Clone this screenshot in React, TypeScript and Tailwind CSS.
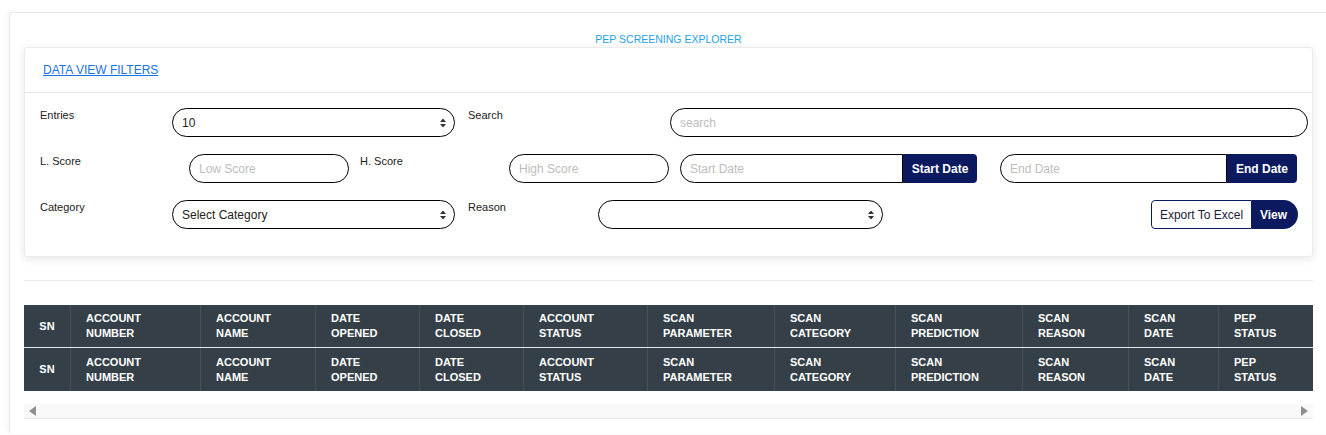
import { useState } from 'react';

const columns = [
  { a: 'SN', b: '', w: 'w-[46px]', center: true },
  { a: 'ACCOUNT', b: 'NUMBER', w: 'w-[130px]' },
  { a: 'ACCOUNT', b: 'NAME', w: 'w-[115px]' },
  { a: 'DATE', b: 'OPENED', w: 'w-[104px]' },
  { a: 'DATE', b: 'CLOSED', w: 'w-[104px]' },
  { a: 'ACCOUNT', b: 'STATUS', w: 'w-[124px]' },
  { a: 'SCAN', b: 'PARAMETER', w: 'w-[127px]' },
  { a: 'SCAN', b: 'CATEGORY', w: 'w-[121px]' },
  { a: 'SCAN', b: 'PREDICTION', w: 'w-[127px]' },
  { a: 'SCAN', b: 'REASON', w: 'w-[106px]' },
  { a: 'SCAN', b: 'DATE', w: 'w-[90px]' },
  { a: 'PEP', b: 'STATUS', w: 'flex-1' },
];

const Caret = () => (
  <svg className="pointer-events-none absolute right-[9px] top-1/2 -translate-y-1/2" width="6" height="9" viewBox="0 0 6 9">
    <path d="M3 0 L6 3.5 H0 Z" fill="#333" />
    <path d="M3 9 L6 5.5 H0 Z" fill="#333" />
  </svg>
);

function Select({ value, width, options }: { value: string; width: string; options: string[] }) {
  const [v, setV] = useState(value);
  return (
    <div className={`relative h-[29px] ${width}`}>
      <select
        value={v}
        onChange={(e) => setV(e.target.value)}
        className="h-full w-full appearance-none rounded-full border border-black bg-white pl-[9px] text-[12px] text-[#222] outline-none"
      >
        {options.map((o) => (
          <option key={o} value={o}>{o}</option>
        ))}
      </select>
      <Caret />
    </div>
  );
}

const Label = ({ text, width }: { text: string; width: string }) => (
  <div className={`${width} shrink-0 text-[11px] leading-[14px] text-[#222]`}>{text}</div>
);

const inputCls =
  'h-[29px] border border-black bg-white pl-[9px] text-[12px] text-[#222] outline-none placeholder:text-[#bdbdbd]';

export default function App() {
  return (
    <div className="min-h-[435px] w-full overflow-hidden bg-white font-['Liberation_Sans',Arial,sans-serif]">
      <div className="ml-[9px] mt-[12px] w-[1330px] rounded-tl-[3px] border-l border-t border-[#e9e9e9] bg-white pb-[14px] pl-[14px] pr-[26px] pt-[20px] shadow-[-3px_0_6px_rgba(0,0,0,0.04)]">
        <div className="text-center text-[10.5px] leading-[12px] text-[#1ea2e6]">PEP SCREENING EXPLORER</div>

        {/* filter card */}
        <div className="mt-[2px] rounded-[3px] border border-[#ececec] bg-white shadow-[0_2px_8px_rgba(0,0,0,0.1)]">
          <div className="flex h-[45px] items-center border-b border-[#e8e8e8] pl-[18px]">
            <a href="#" className="text-[12px] text-[#1a73e8] underline">DATA VIEW FILTERS</a>
          </div>

          <div className="flex flex-col gap-[17px] pb-[27px] pl-[15px] pr-[4px] pt-[15px]">
            <div className="flex items-start">
              <Label text="Entries" width="w-[132px]" />
              <Select value="10" width="w-[283px]" options={['10', '25', '50', '100']} />
              <div className="w-[13px]" />
              <Label text="Search" width="w-[202px]" />
              <input placeholder="search" className={`${inputCls} flex-1 rounded-full`} />
            </div>

            <div className="flex items-start">
              <Label text="L. Score" width="w-[149px]" />
              <input placeholder="Low Score" className={`${inputCls} w-[160px] rounded-full`} />
              <div className="w-[11px]" />
              <Label text="H. Score" width="w-[149px]" />
              <input placeholder="High Score" className={`${inputCls} w-[160px] rounded-full`} />
              <div className="ml-[11px] flex">
                <input placeholder="Start Date" className={`${inputCls} w-[223px] rounded-l-full`} />
                <button className="h-[29px] w-[74px] rounded-r-[4px] bg-[#0b1a5e] text-[12px] font-bold text-white">Start Date</button>
              </div>
              <div className="ml-[23px] flex">
                <input placeholder="End Date" className={`${inputCls} w-[227px] rounded-l-full`} />
                <button className="h-[29px] w-[70px] rounded-r-[4px] bg-[#0b1a5e] text-[12px] font-bold text-white">End Date</button>
              </div>
            </div>

            <div className="flex items-start">
              <Label text="Category" width="w-[132px]" />
              <Select value="Select Category" width="w-[283px]" options={['Select Category']} />
              <div className="w-[13px]" />
              <Label text="Reason" width="w-[130px]" />
              <Select value="" width="w-[285px]" options={['']} />
              <div className="ml-auto mr-[10px] flex h-[29px]">
                <button className="h-full w-[101px] rounded-l-[4px] border border-[#0b1a5e] bg-white text-[12px] text-[#1c1c3c]">Export To Excel</button>
                <button className="h-full w-[46px] rounded-r-full bg-[#0b1a5e] pr-[3px] text-[12px] font-bold text-white">View</button>
              </div>
            </div>
          </div>
        </div>

        <div className="mt-[23px] h-px bg-[#ebebeb]" />

        {/* table */}
        <div className="mt-[24px]">
          {[0, 1].map((r) => (
            <div key={r} className={`flex h-[43px] bg-[#343f47] ${r === 0 ? 'border-b-[1.5px] border-[#e6e6e6]' : ''}`}>
              {columns.map((c, i) => (
                <div
                  key={i}
                  className={`${c.w} flex flex-col justify-center text-[11px] font-bold leading-[15px] text-white ${i > 0 ? 'border-l border-[#46515a] pl-[15px]' : 'items-center'}`}
                >
                  <span>{c.a}</span>
                  {c.b && <span>{c.b}</span>}
                </div>
              ))}
            </div>
          ))}
        </div>

        {/* scrollbar */}
        <div className="mt-[13px] flex h-[15px] items-center justify-between border-b border-[#e6e6e6] bg-[#f9f9f9] px-[5px]">
          <svg width="7" height="10" viewBox="0 0 7 10"><path d="M0 5 L7 0 V10 Z" fill="#8f8f8f" /></svg>
          <svg width="7" height="10" viewBox="0 0 7 10"><path d="M7 5 L0 0 V10 Z" fill="#8f8f8f" /></svg>
        </div>
      </div>
    </div>
  );
}
